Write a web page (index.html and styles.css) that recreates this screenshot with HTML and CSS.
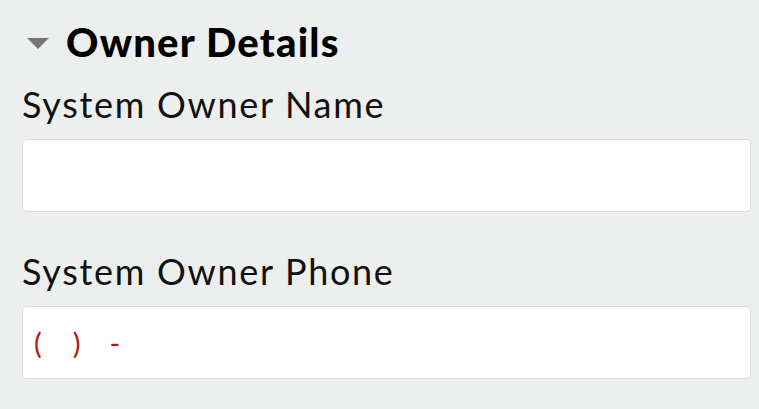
FILE: index.html
```html
<!DOCTYPE html>
<html lang="en">
<head>
<meta charset="utf-8">
<title>Owner Details</title>
<link rel="stylesheet" href="styles.css">
</head>
<body>
<section class="panel">
  <h2 class="section-title"><span class="caret"></span><span class="title-text">Owner Details</span></h2>
  <label class="field-label">System Owner Name</label>
  <div class="field"></div>
  <label class="field-label second">System Owner Phone</label>
  <div class="field phone"><span class="p-open">(</span><span class="p-close">)</span><span class="p-dash">-</span></div>
</section>
</body>
</html>
```
FILE: styles.css
```css
html, body {
  margin: 0;
  padding: 0;
  background: #edeeee;
}
body {
  font-family: "Lato", "Liberation Sans", sans-serif;
  color: #111;
}
.panel {
  display: flex;
  flex-direction: column;
  padding: 18px 8px 0 22px;
}
.section-title {
  display: flex;
  align-items: center;
  margin: 0;
  font-size: 40px;
  line-height: 48px;
  font-weight: 900;
  letter-spacing: 1.2px;
  color: #000;
}
.caret {
  width: 0;
  height: 0;
  margin-left: 5px;
  margin-right: 17px;
  margin-top: 2px;
  border-left: 11.5px solid transparent;
  border-right: 11.5px solid transparent;
  border-top: 11px solid #767676;
}
.field-label {
  display: block;
  margin-top: 16px;
  font-size: 36px;
  line-height: 44px;
  letter-spacing: 1.7px;
  color: #111;
}
.field-label.second {
  margin-top: 37px;
}
.field {
  box-sizing: border-box;
  height: 73px;
  margin-top: 13px;
  background: #fff;
  border: 1px solid #dcdcdc;
  border-radius: 5px;
}
.phone {
  display: flex;
  align-items: center;
  padding-left: 11px;
  font-size: 29px;
  color: #b3140f;
}
.p-close {
  margin-left: 31px;
}
.p-dash {
  margin-left: 29px;
}
```
